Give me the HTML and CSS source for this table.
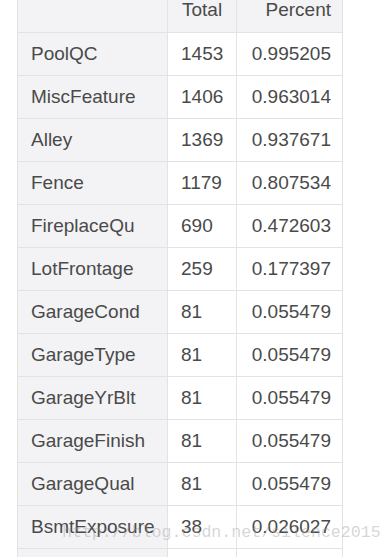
FILE: index.html
```html
<!DOCTYPE html>
<html>
<head>
<meta charset="utf-8">
<link rel="stylesheet" href="styles.css">
</head>
<body>
<div class="page">
<table class="df">
<thead>
<tr><th class="idx"></th><th class="total">Total</th><th class="pct">Percent</th></tr>
</thead>
<tbody>
<tr><th class="idx">PoolQC</th><td class="total">1453</td><td class="pct">0.995205</td></tr>
<tr><th class="idx">MiscFeature</th><td class="total">1406</td><td class="pct">0.963014</td></tr>
<tr><th class="idx">Alley</th><td class="total">1369</td><td class="pct">0.937671</td></tr>
<tr><th class="idx">Fence</th><td class="total">1179</td><td class="pct">0.807534</td></tr>
<tr><th class="idx">FireplaceQu</th><td class="total">690</td><td class="pct">0.472603</td></tr>
<tr><th class="idx">LotFrontage</th><td class="total">259</td><td class="pct">0.177397</td></tr>
<tr><th class="idx">GarageCond</th><td class="total">81</td><td class="pct">0.055479</td></tr>
<tr><th class="idx">GarageType</th><td class="total">81</td><td class="pct">0.055479</td></tr>
<tr><th class="idx">GarageYrBlt</th><td class="total">81</td><td class="pct">0.055479</td></tr>
<tr><th class="idx">GarageFinish</th><td class="total">81</td><td class="pct">0.055479</td></tr>
<tr><th class="idx">GarageQual</th><td class="total">81</td><td class="pct">0.055479</td></tr>
<tr><th class="idx">BsmtExposure</th><td class="total">38</td><td class="pct">0.026027</td></tr>
<tr><th class="idx"></th><td class="total"></td><td class="pct"></td></tr>
</tbody>
</table>
<div class="watermark">http://blog.csdn.net/silence2015</div>
</div>
</body>
</html>
```

FILE: styles.css
```css
html, body {
  margin: 0;
  padding: 0;
  background: #ffffff;
  overflow: hidden;
}
.page {
  position: relative;
  height: 557px;
  overflow: hidden;
  padding-left: 17px;
}
.df {
  border-collapse: collapse;
  margin-top: -11px;
  font-family: "Liberation Sans", Arial, sans-serif;
  font-size: 19px;
  color: #4a4a4a;
  border-left: 1px solid #e3e3e6;
}
.df th, .df td {
  height: 43px;
  padding: 0;
  font-weight: normal;
  border-bottom: 1px solid #e3e3e6;
  border-right: 1px solid #e3e3e6;
  vertical-align: middle;
  box-sizing: border-box;
}
.df thead th {
  background: #f3f3f5;
}
.df .idx {
  width: 150px;
  min-width: 150px;
  text-align: left;
  padding-left: 13px;
  background: #f3f3f5;
}
.df .total {
  width: 69px;
  text-align: left;
  padding-left: 13px;
}
.df .pct {
  width: 106px;
  text-align: right;
  padding-right: 11px;
}
.df thead .total { padding-left: 14px; }
.df tbody td { background: #ffffff; }
.watermark {
  position: absolute;
  left: 62px;
  top: 523px;
  font-family: "Liberation Mono", "Courier New", monospace;
  font-size: 16.6px;
  color: rgba(150, 150, 150, 0.4);
  white-space: nowrap;
  pointer-events: none;
}
```
